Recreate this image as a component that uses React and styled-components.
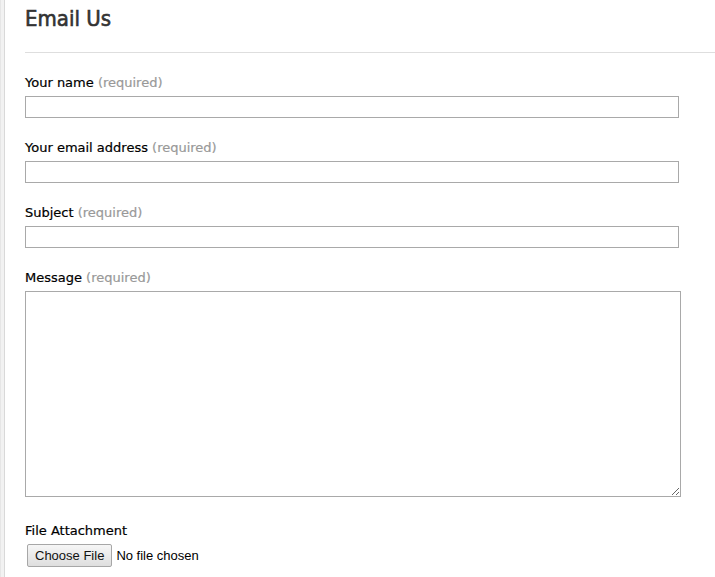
import React from "react";
import styled, { createGlobalStyle } from "styled-components";

const Global = createGlobalStyle`
  html, body { margin: 0; padding: 0; background: #fff; }
  body { font-family: "DejaVu Sans", Verdana, sans-serif; }
`;

const Page = styled.div`
  min-height: 577px;
  box-sizing: border-box;
  border-left: 1px solid #e6e6e6;
  box-shadow: inset 3px 0 0 #f2f2f2, inset 4px 0 0 #d9d9d9;
  padding: 0 0 0 24px;
`;

const Title = styled.h1`
  margin: 0;
  padding-top: 5px;
  font-family: "DejaVu Sans Condensed", "DejaVu Sans", sans-serif;
  font-size: 22px;
  line-height: 28px;
  font-weight: normal;
  -webkit-text-stroke: 0.6px #333;
  color: #333;
`;

const Divider = styled.hr`
  border: 0;
  border-top: 1px solid #dedede;
  margin: 19px 0 22px 0;
`;

const Field = styled.div`
  margin-bottom: ${(p) => p.$gap || 22}px;
`;

const Label = styled.label`
  display: block;
  font-size: 13px;
  line-height: 16px;
  color: #000;
  -webkit-text-stroke: 0.2px currentColor;
  margin-bottom: 5px;
`;

const Req = styled.span`
  color: #999;
`;

const Input = styled.input`
  display: block;
  box-sizing: border-box;
  width: 654px;
  height: 22px;
  border: 1px solid #a9a9a9;
  margin: 0;
  padding: 2px;
`;

const Area = styled.textarea`
  display: block;
  box-sizing: border-box;
  width: 656px;
  height: 206px;
  border: 1px solid #a9a9a9;
  margin: 0;
  padding: 2px;
`;

const FileRow = styled.div`
  display: flex;
  align-items: center;
  gap: 4px;
  margin: 1px 0 0 2px;
  font-family: "Liberation Sans", Arial, sans-serif;
  font-size: 13px;
  color: #000;
`;

const FileButton = styled.button`
  font-family: "Liberation Sans", Arial, sans-serif;
  font-size: 13px;
  height: 23px;
  padding: 0 7px;
  border: 1px solid #a7a7a7;
  border-radius: 2px;
  background: linear-gradient(#f6f6f6, #dedede);
  color: #111;
`;

export default function App() {
  return (
    <Page>
      <Global />
      <Title>Email Us</Title>
      <Divider />
      <Field>
        <Label>Your name <Req>(required)</Req></Label>
        <Input />
      </Field>
      <Field>
        <Label>Your email address <Req>(required)</Req></Label>
        <Input />
      </Field>
      <Field>
        <Label>Subject <Req>(required)</Req></Label>
        <Input />
      </Field>
      <Field $gap={26}>
        <Label>Message <Req>(required)</Req></Label>
        <Area />
      </Field>
      <Field>
        <Label>File Attachment</Label>
        <FileRow>
          <FileButton>Choose File</FileButton>
          <span>No file chosen</span>
        </FileRow>
      </Field>
    </Page>
  );
}
